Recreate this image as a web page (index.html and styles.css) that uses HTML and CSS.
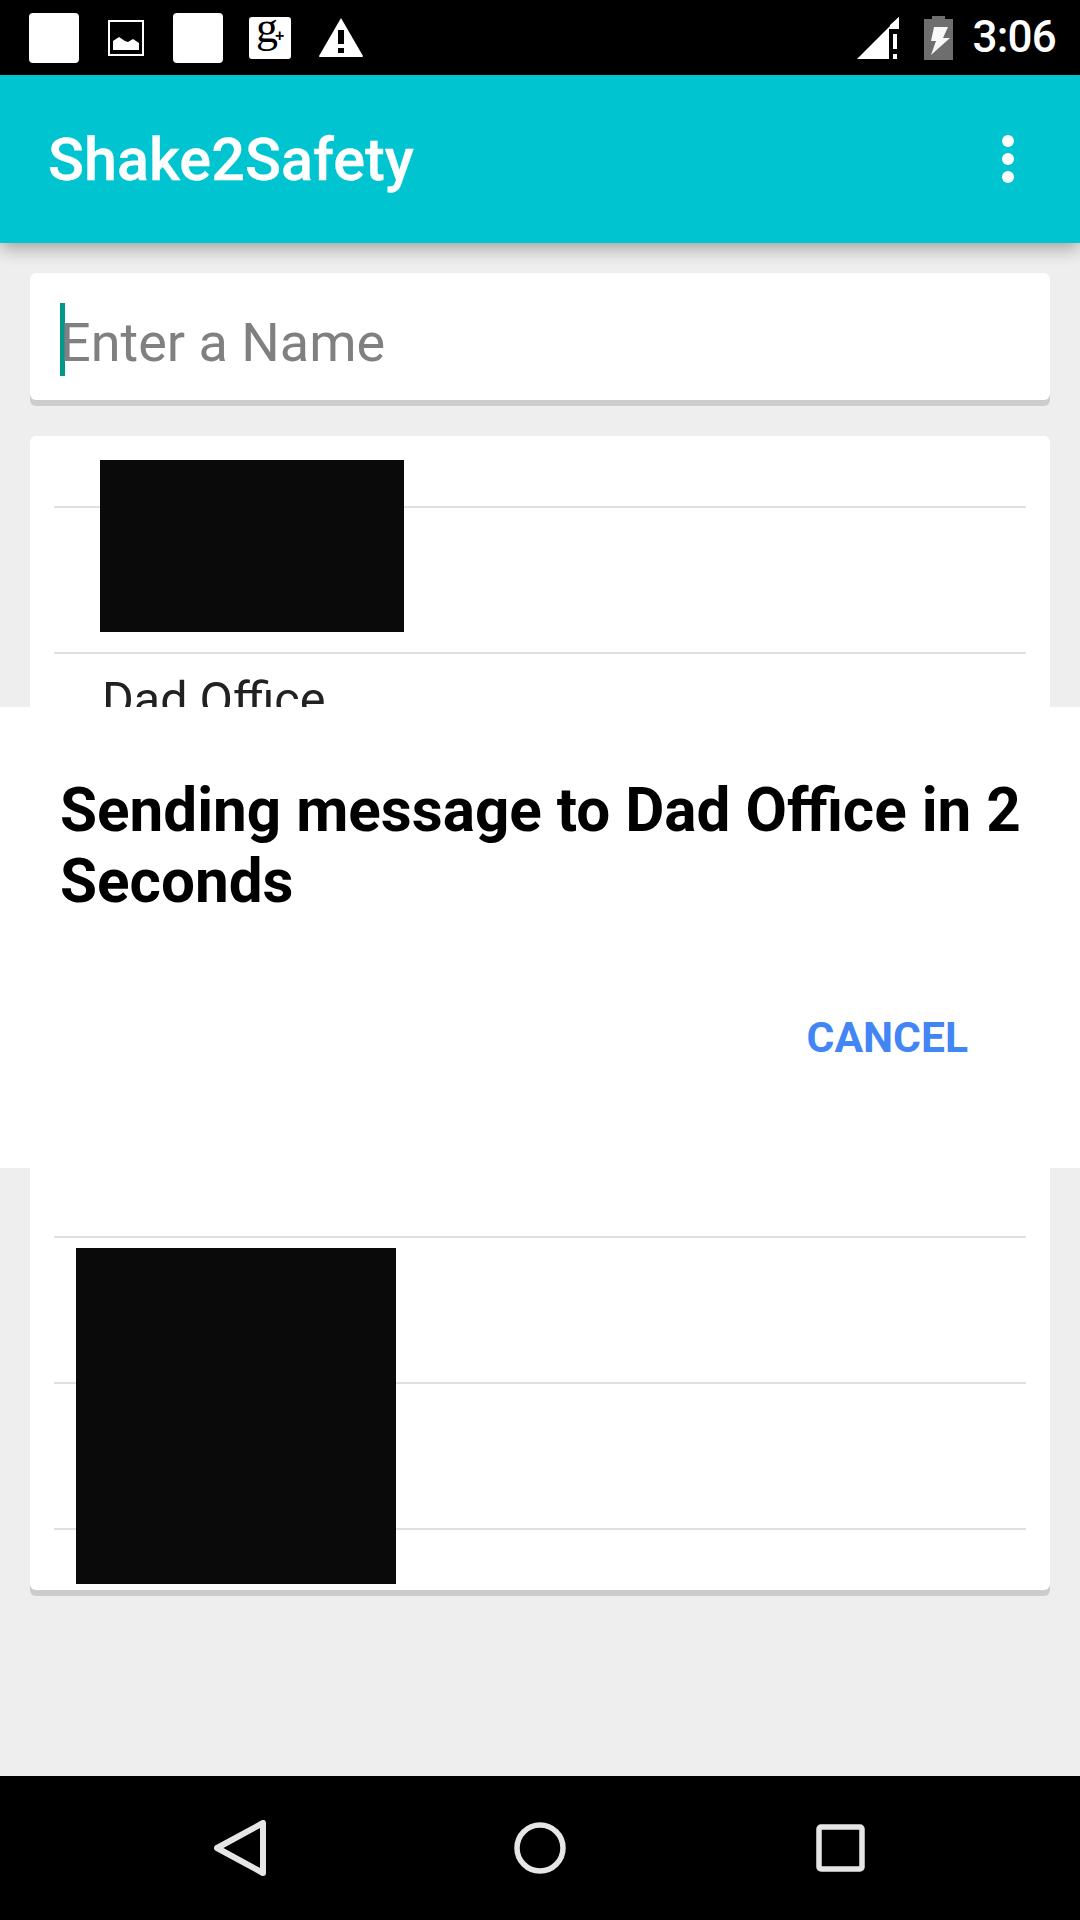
FILE: index.html
```html
<!DOCTYPE html>
<html lang="en">
<head>
<meta charset="utf-8">
<title>Shake2Safety</title>
<link rel="stylesheet" href="styles.css">
</head>
<body>
<div class="screen">
  <header class="statusbar">
    <div class="notifs">
      <span class="blank"></span>
      <svg class="ic-image" viewBox="0 0 36 36"><rect x="1" y="1" width="34" height="34" fill="none" stroke="#fff" stroke-width="2"/><path d="M5 30V21l6-4 6 4 3 1 5-3 6 4v7z" fill="#fff"/></svg>
      <span class="blank"></span>
      <svg class="ic-gplus" viewBox="0 0 42 42"><rect width="42" height="42" rx="3" fill="#fff"/><text x="7" y="25" class="gplus-g">g<tspan class="gplus-p" dx="-3" dy="-1">+</tspan></text></svg>
      <svg class="ic-warn" viewBox="0 0 46 40"><path d="M23 1 45 39a1 1 0 0 1-1 1H2a1 1 0 0 1-1-1z" fill="#fff"/><rect x="20" y="13" width="6" height="14" fill="#000"/><rect x="20" y="31" width="6" height="5" fill="#000"/></svg>
    </div>
    <div class="sysicons">
      <svg class="ic-signal" viewBox="0 0 42 42"><path d="M42 0V42H0z" fill="#fff"/><rect x="32" y="12" width="10" height="30" fill="#000"/><rect x="36" y="17" width="4" height="15" fill="#fff"/><rect x="36" y="37" width="4" height="5" fill="#fff"/><path d="M33 8 42 0v12h-9z" fill="#fff"/></svg>
      <svg class="ic-batt" viewBox="0 0 29 44"><path d="M8 0h13v3h8v41H0V3h8z" fill="#6e6e6e"/><path d="M10 11h14l-5 11h7L7 39l5-14H7z" fill="#fff" opacity=".95"/></svg>
      <span class="clock">3:06</span>
    </div>
  </header>

  <div class="appbar">
    <h1 class="apptitle">Shake2Safety</h1>
    <div class="kebab"><i></i><i></i><i></i></div>
  </div>

  <main class="content">
    <div class="card searchcard">
      <span class="caret"></span>
      <span class="placeholder">Enter a Name</span>
    </div>
    <div class="card listcard">
      <div class="row row-first"></div>
      <div class="row"></div>
      <div class="row"><span class="rowname">Dad Office</span></div>
      <div class="row"></div>
      <div class="row"></div>
      <div class="row"></div>
      <div class="row"></div>
      <div class="row"></div>
      <div class="row row-last"></div>
    </div>
  </main>

  <nav class="navbar">
    <svg class="ic-back" viewBox="0 0 52 56"><path d="M3 28 49 3V53z" fill="none" stroke="#e6e6e6" stroke-width="6" stroke-linejoin="round"/></svg>
    <svg class="ic-home" viewBox="0 0 52 52"><circle cx="26" cy="26" r="23" fill="none" stroke="#e6e6e6" stroke-width="5.5"/></svg>
    <svg class="ic-recent" viewBox="0 0 49 48"><rect x="3" y="3" width="43" height="42" rx="2" fill="none" stroke="#e6e6e6" stroke-width="5.5"/></svg>
  </nav>

  <span class="redact redact-a"></span>
  <span class="redact redact-b"></span>

  <section class="dialog">
    <p class="dialog-msg">Sending message to Dad Office in 2 Seconds</p>
    <div class="dialog-actions"><span class="dialog-btn">CANCEL</span></div>
  </section>
</div>
</body>
</html>
```

FILE: styles.css
```css
* { box-sizing: border-box; }
html, body { margin: 0; padding: 0; }
body { width: 1080px; height: 1920px; overflow: hidden; font-family: Roboto, "Noto Sans", sans-serif; background: #eee; }
.screen { position: relative; width: 1080px; height: 1920px; display: flex; flex-direction: column; overflow: hidden; }

.statusbar { height: 75px; flex: none; background: #000; display: flex; justify-content: space-between; align-items: center; padding: 0 24px 0 29px; }
.notifs { display: flex; align-items: center; }
.blank { width: 50px; height: 50px; background: #fff; border-radius: 4px; display: block; }
.ic-image { width: 36px; height: 36px; margin: 0 29px; }
.ic-gplus { width: 42px; height: 42px; margin-left: 26px; overflow: visible; }
.ic-warn { width: 46px; height: 40px; margin-left: 27px; margin-top: -1px; }
.gplus-g { font-family: "Liberation Serif", serif; font-size: 44px; fill: #000; }
.gplus-p { font-family: "Liberation Sans", sans-serif; font-size: 16px; font-weight: 700; }
.sysicons { display: flex; align-items: center; }
.ic-signal { width: 42px; height: 42px; margin-right: 25px; }
.ic-batt { width: 29px; height: 44px; margin-right: 20px; }
.clock { color: #fff; font-size: 44px; line-height: 75px; font-weight: 500; letter-spacing: -.8px; }

.appbar { height: 168px; flex: none; background: #00c5d1; display: flex; align-items: center; justify-content: space-between; padding: 3px 66px 0 48px; position: relative; z-index: 1; box-shadow: 0 6px 16px rgba(0,0,0,.3); }
.apptitle { margin: 0; font-size: 59.4px; font-weight: 500; color: #fff; line-height: 1; -webkit-text-stroke: .3px #fff; }
.kebab { display: flex; flex-direction: column; gap: 6px; margin-top: -3px; }
.kebab i { display: block; width: 12px; height: 12px; border-radius: 50%; background: #fff; }

.content { flex: 1; padding: 30px 30px 0; display: flex; flex-direction: column; gap: 36px; }
.card { background: #fff; border-radius: 6px; box-shadow: 0 6px 0 #ccc; }
.searchcard { height: 127px; display: flex; align-items: center; padding-left: 30px; position: relative; }
.caret { width: 5px; height: 73px; background: #009688; flex: none; margin-top: 6px; }
.placeholder { font-size: 54px; color: #808080; margin-left: -5px; line-height: 1; margin-top: 13px; }
.listcard { height: 1154px; padding: 0 24px; display: flex; flex-direction: column; }
.row { height: 146px; flex: none; border-bottom: 2px solid #e0e0e0; padding-left: 48px; padding-top: 17px; }
.row-first { height: 72px; }
.row-last { flex: 1; height: auto; border-bottom: 0; }
.rowname { font-size: 48.5px; color: #212121; line-height: 1.2; }

.navbar { height: 144px; flex: none; background: #000; display: flex; align-items: center; padding-left: 214px; }
.ic-back { width: 52px; height: 56px; }
.ic-home { width: 52px; height: 52px; margin-left: 248px; }
.ic-recent { width: 49px; height: 48px; margin-left: 250px; }

.redact { position: absolute; background: #0a0a0a; display: block; }
.redact-a { left: 100px; top: 460px; width: 304px; height: 172px; }
.redact-b { left: 76px; top: 1248px; width: 320px; height: 336px; }

.dialog { position: absolute; left: 0; top: 707px; width: 1080px; height: 461px; background: #fff; padding: 68px 40px 0 60px; }
.dialog-msg { margin: 0; font-size: 60.2px; line-height: 71px; font-weight: 700; color: #000; }
.dialog-actions { display: flex; justify-content: flex-end; padding: 96px 72px 0 0; }
.dialog-btn { font-size: 42.6px; font-weight: 700; color: #4285f4; line-height: 48px; }
```
